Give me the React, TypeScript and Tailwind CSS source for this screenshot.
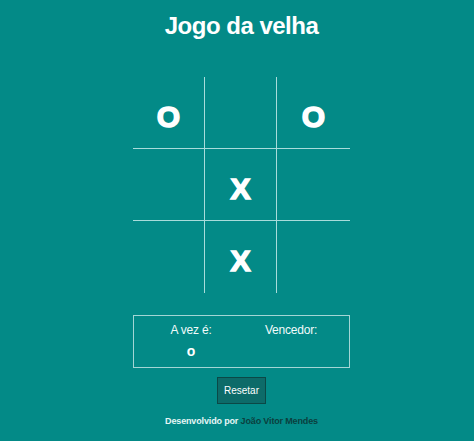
import React from "react";

const board = ["O", "", "O", "", "X", "", "", "X", ""];

const App = () => {
  return (
    <div className="min-h-screen w-full bg-[#038a87] pl-[9px] font-['Liberation_Sans',Arial,sans-serif] text-white">
      <div className="flex flex-col items-center">
        <h1 className="mt-[12px] text-[24px] leading-[28px] font-bold tracking-[-0.5px]">
          Jogo da velha
        </h1>

        <div className="mt-[37px] grid grid-cols-[72px_72px_73px]">
          {board.map((cell, i) => (
            <div
              key={i}
              className={`flex h-[72px] items-center justify-center pt-[8px] text-[30px] font-bold leading-none [-webkit-text-stroke:1.5px_white] ${
                i % 3 !== 2 ? "border-r border-[#a9dcdb]" : ""
              } ${i < 6 ? "border-b border-[#a9dcdb]" : ""}`}
            >
              {cell}
            </div>
          ))}
        </div>

        <div className="mt-[22px] w-[217px] border border-[#a3d6d5] pt-[6px] pb-[7px] pl-[7px]">
          <div className="grid grid-cols-[100px_100px] text-center">
            <div>
              <p className="text-[12px] leading-[16px] tracking-[-0.2px] text-[#f2fbfb]">A vez é:</p>
              <p className="mt-[4px] text-[14px] leading-[18px] font-bold">o</p>
            </div>
            <div>
              <p className="text-[12px] leading-[16px] tracking-[-0.2px] text-[#f2fbfb]">Vencedor:</p>
            </div>
          </div>
        </div>

        <button className="mt-[9px] h-[27px] w-[49px] border border-[#0b4846] bg-[#0d6b69] text-[10px] text-white">
          Resetar
        </button>

        <p className="mt-[11px] text-[9px] leading-[12px] font-bold tracking-[-0.15px] text-[#e6f6f6]">
          Desenvolvido por <span className="text-[#0b3f3e]">João Vitor Mendes</span>
        </p>
      </div>
    </div>
  );
};

export default App;
